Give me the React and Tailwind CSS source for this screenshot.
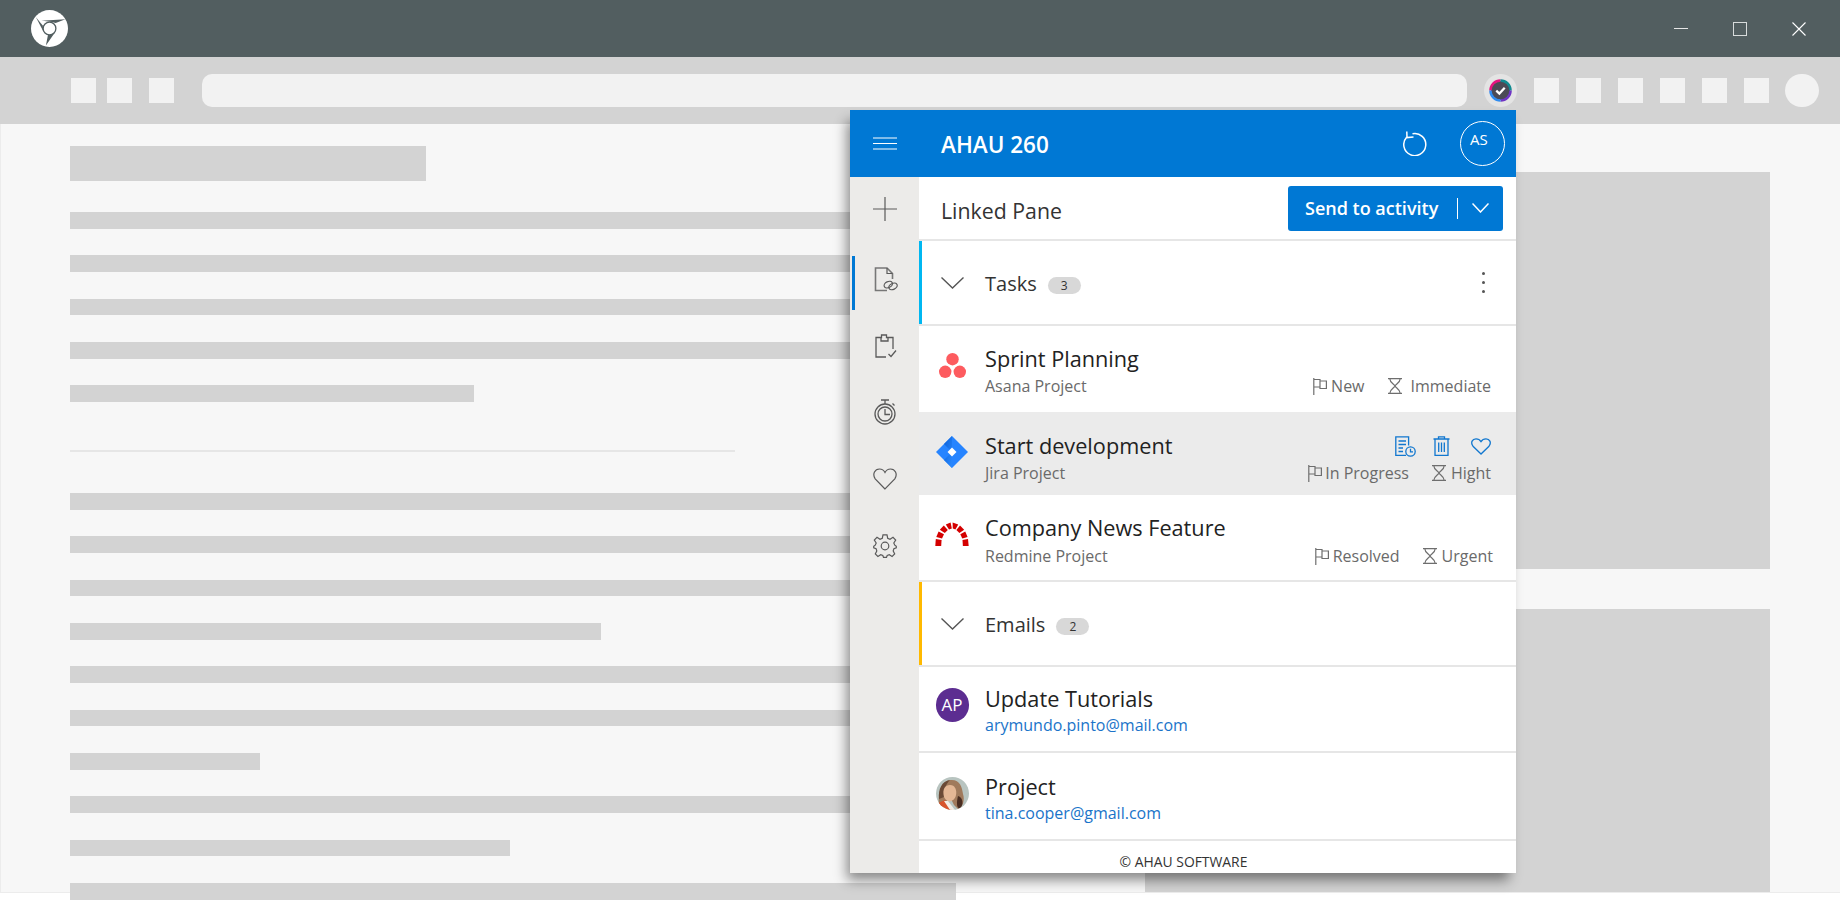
const font = { fontFamily: '"Open Sans", "Noto Sans", sans-serif' };

function ChromeLogo() {
  return (
    <svg width="37" height="37" viewBox="0 0 36 36">
      <circle cx="18" cy="18" r="18" fill="#fff" />
      <circle cx="18" cy="18" r="6.2" fill="none" stroke="#525e60" strokeWidth="1.3" />
      <path d="M10 10.5 C14 11 19 11 24 12.6 L33.5 9 Z" fill="#525e60" />
      <path d="M4.8 7 L12.3 21.5 L11.4 15 Z" fill="#525e60" />
      <path d="M23.6 21.5 L14.5 34.5 L16.5 24.4 C19 24.6 21.6 23.6 23.6 21.5 Z" fill="#525e60" />
    </svg>
  );
}

function ExtensionIcon() {
  return (
    <div className="w-[33px] h-[33px] rounded-full bg-[#e4e4e4] flex items-center justify-center">
      <svg width="23" height="23" viewBox="0 0 24 24">
        <circle cx="12" cy="12" r="10" fill="#4b4a55" />
        <g fill="none" strokeWidth="2.6">
          <path d="M1.5 12 A10.5 10.5 0 0 1 12 1.5" stroke="#e6157f" />
          <path d="M12 1.5 A10.5 10.5 0 0 1 22.5 12" stroke="#0f8a8f" />
          <path d="M22.5 12 A10.5 10.5 0 0 1 12 22.5" stroke="#6f35c4" />
          <path d="M12 22.5 A10.5 10.5 0 0 1 1.5 12" stroke="#2f8cf0" />
        </g>
        <path d="M7.6 12.2 L10.8 15.2 L16.4 9.2" fill="none" stroke="#fff" strokeWidth="2.4" />
      </svg>
    </div>
  );
}

function Block() {
  return <div className="w-[25px] h-[25px] bg-[#f2f2f2]" />;
}

function PlainIcon({ w = 24, h = 24, box = "0 0 24 24", color = "#5a5a5a", sw = 1.2, children }) {
  return (
    <svg width={w} height={h} viewBox={box} fill="none" stroke={color} strokeWidth={sw} className="shrink-0">
      {children}
    </svg>
  );
}

function Flag() {
  return (
    <PlainIcon w={14} h={17} box="0 0 14 17" color="#6e6e6e">
      <path d="M.8 0V17M.8 1.5H7V3H13.4V10.5H7V9H.8M7 1.5V9" />
    </PlainIcon>
  );
}

function Hourglass() {
  return (
    <PlainIcon w={14} h={16} box="0 0 14 16" color="#6e6e6e">
      <path d="M0 .7H14M0 15.3H14M1.8 .7C2 5 6 6 7 8C8 10 12 11 12.2 15.3M12.2 .7C12 5 8 6 7 8C6 10 2 11 1.8 15.3" />
    </PlainIcon>
  );
}

function Meta({ status, priority, flagGap, hourGap }) {
  return (
    <div className="flex items-center gap-[23px] text-[16px] leading-[20px] text-[#6a6a6a]">
      <span className={`flex items-center ${flagGap}`}><Flag />{status}</span>
      <span className={`flex items-center ${hourGap}`}><Hourglass />{priority}</span>
    </div>
  );
}

function AsanaLogo() {
  return (
    <svg width="27" height="25" viewBox="0 0 27 25" fill="#fd5b5f">
      <circle cx="13.5" cy="6.2" r="6.2" />
      <circle cx="6.2" cy="18.8" r="6.2" />
      <circle cx="20.8" cy="18.8" r="6.2" />
    </svg>
  );
}

function JiraLogo() {
  return (
    <svg width="32" height="32" viewBox="0 0 32 32">
      <defs>
        <linearGradient id="jira" x1="0" y1="0" x2="1" y2="1">
          <stop offset="0" stopColor="#0a5fd8" />
          <stop offset="1" stopColor="#2b8bff" />
        </linearGradient>
      </defs>
      <path d="M16 0 L32 16 L16 32 L0 16 Z" fill="#2684ff" />
      <path d="M16 0 L8 8 L16 16 L8 24 L16 32 L16 20.5 L11.5 16 L16 11.5 Z" fill="url(#jira)" />
      <path d="M16 11.5 L20.5 16 L16 20.5 L11.5 16 Z" fill="#fff" />
    </svg>
  );
}

function RedmineLogo() {
  return (
    <svg width="34" height="24" viewBox="0 0 34 24" fill="#d40000">
      <path d="M.3 24 L.8 17 L6.6 18 L6.2 24 Z" />
      <path d="M1.3 15 L3.6 9.6 L9 12.2 L7 16.5 Z" />
      <path d="M4.8 7.8 L8.8 3.6 L12.8 8 L9.8 11 Z" />
      <path d="M10.8 2.6 L15.6 .6 L16.8 6.4 L14 7.4 Z" />
      <path d="M17.6 .5 L23.2 2.4 L20.4 7.4 L17.8 6.4 Z" />
      <path d="M25 3.6 L29.2 7.8 L24.4 11 L21.4 8 Z" />
      <path d="M30.2 9.6 L32.6 15 L27.3 16.5 L25.3 12.2 Z" />
      <path d="M33 17 L33.7 24 L27.9 24 L27.5 18 Z" />
    </svg>
  );
}

function PhotoAvatar() {
  return (
    <svg width="33" height="33" viewBox="0 0 33 33">
      <defs>
        <clipPath id="photo"><circle cx="16.5" cy="16.5" r="16.5" /></clipPath>
      </defs>
      <g clipPath="url(#photo)">
        <rect width="33" height="33" fill="#b8c4c0" />
        <path d="M3 33 C2 20 3 5 14 3 C24 2 26 10 27 17 C29 23 27 30 22 32 L18 28 L14 20 Z" fill="#a07a5c" />
        <path d="M3 22 C2 12 6 4 14 3 C10 7 8 12 8 20 Z" fill="#6b4a36" />
        <path d="M8 20 C6 12 9 8 14 8 C19 8 21 13 20 18 C19 23 15 25 12 24 C10 23 9 22 8 20 Z" fill="#e4b795" />
        <path d="M0 27 L9 23 L17 33 L0 33 Z" fill="#d8532c" />
        <path d="M8 24 L12 24 L19 33 L14 33 Z" fill="#f3ede6" />
        <path d="M22 19 C27 20 28 28 24 31 C21 32 20 27 22 19 Z" fill="#4a2e22" />
      </g>
    </svg>
  );
}

const iconBlue = "#1177cf";

function ActionIcons() {
  return (
    <div className="flex items-center">
      <PlainIcon w={21} h={21} box="0 0 21 21" color={iconBlue} sw={1.3}>
        <path d="M11 19.4H.8V.8H13.6V9.5" />
        <path d="M3.5 5H11M3.5 8.5H11M3.5 12H8M3.5 15.5H8" />
        <circle cx="15.5" cy="15.5" r="4.7" />
        <path d="M15.5 12.8V15.8H18" />
      </PlainIcon>
      <div className="ml-[17px]">
        <PlainIcon w={17} h={20} box="0 0 17 20" color={iconBlue} sw={1.3}>
          <path d="M.5 3H16.5M5.5 3V.8H11.5V3M2 3V19.3H15V3M5.7 6.5V16M8.5 6.5V16M11.3 6.5V16" />
        </PlainIcon>
      </div>
      <div className="ml-[21px]">
        <PlainIcon w={20} h={17} box="0 0 20 17" color={iconBlue} sw={1.3}>
          <path d="M10 16 L2 8.2 C-.8 4.5 1.4 .8 5 .8 C7.2 .8 9 2 10 3.6 C11 2 12.8 .8 15 .8 C18.6 .8 20.8 4.5 18 8.2 Z" />
        </PlainIcon>
      </div>
    </div>
  );
}

function SideIcon({ active, className, children }) {
  return (
    <div className={`relative flex justify-center ${className}`}>
      {active && <div className="absolute left-[2px] top-[-11px] w-[3px] h-[54px] bg-[#0078d4]" />}
      {children}
    </div>
  );
}

function Sidebar() {
  return (
    <div className="w-[69px] shrink-0 bg-[#ecebe9] flex flex-col">
      <SideIcon className="mt-[20px]">
        <PlainIcon w={24} h={24}>
          <path d="M12 0V24M0 12H24" />
        </PlainIcon>
      </SideIcon>
      <SideIcon active className="mt-[46px] pl-[3px]">
        <PlainIcon w={24} h={25} box="0 0 24 25">
          <path d="M13 23.5H1.5V1H13L18.5 6.5V12" stroke="#777" strokeWidth="1.6" />
          <path d="M13 1V6.5H18.5" />
          <ellipse cx="14.3" cy="17.6" rx="4.4" ry="3" transform="rotate(-25 14.3 17.6)" />
          <ellipse cx="19" cy="19.4" rx="4.4" ry="3" transform="rotate(-25 19 19.4)" />
        </PlainIcon>
      </SideIcon>
      <SideIcon className="mt-[42px] pl-[2px]">
        <PlainIcon w={22} h={24} box="0 0 22 24" sw={1.3}>
          <path d="M11 23H1V3.5H6.5V1H11.5V3.5H18V15" />
          <path d="M6 3.5V7H13V3.5" />
          <path d="M13.5 20L16 22.5L21 16.5" />
        </PlainIcon>
      </SideIcon>
      <SideIcon className="mt-[41px]">
        <PlainIcon w={22} h={26} box="0 0 22 26" sw={1.3}>
          <circle cx="11" cy="15" r="10" />
          <circle cx="11" cy="15" r="7" />
          <path d="M11 10V15.5H16M7 1H15M11 1V5M18.5 4.5L20.5 6.5" />
        </PlainIcon>
      </SideIcon>
      <SideIcon className="mt-[43px]">
        <PlainIcon w={24} h={22} box="0 0 24 22">
          <path d="M12 21 L2.2 10.8 C-1 6 2 1 6.5 1 C9 1 11 2.5 12 4.5 C13 2.5 15 1 17.5 1 C22 1 25 6 21.8 10.8 Z" />
        </PlainIcon>
      </SideIcon>
      <SideIcon className="mt-[44px]">
        <PlainIcon w={24} h={24}>
          <circle cx="12" cy="12" r="3.8" />
          <path d="M10 .8H14L14.7 4.2L17 5.2L20 3.3L22.7 6L20.8 9L21.8 11.2L23.3 12.3V13.8L20.9 14.7L20.2 16.9L21.7 19.9L19.1 22.4L16.3 20.7L14.2 21.5L13.5 23.3H10.5L9.8 21.5L7.7 20.7L4.9 22.4L2.3 19.9L3.8 16.9L3.1 14.7L.7 13.8V12.3L2.2 11.2L3.2 9L1.3 6L4 3.3L7 5.2L9.3 4.2Z" />
        </PlainIcon>
      </SideIcon>
    </div>
  );
}

function Divider() {
  return <div className="h-[2px] bg-[#e6e6e6] shrink-0" />;
}

function SectionHead({ title, count, accent, kebab }) {
  return (
    <div className={`h-[83px] flex items-center border-l-[3px] ${accent} pl-[19px] pr-[31px]`}>
      <PlainIcon w={23} h={12} box="0 0 23 12" color="#555" sw={1.4}>
        <path d="M.5 .5L11.5 11L22.5 .5" />
      </PlainIcon>
      <span className="ml-[21px] mt-[2px] text-[20px] text-[#333]">{title}</span>
      <span className="ml-[11px] mt-[5px] w-[33px] h-[17px] rounded-full bg-[#d8d8d8] text-[12px] leading-[17px] text-center text-[#333]">{count}</span>
      {kebab && (
        <div className="ml-auto flex flex-col gap-[6px]">
          <div className="w-[3px] h-[3px] rounded-full bg-[#555]" />
          <div className="w-[3px] h-[3px] rounded-full bg-[#555]" />
          <div className="w-[3px] h-[3px] rounded-full bg-[#555]" />
        </div>
      )}
    </div>
  );
}

function TaskRow({ logo, title, sub, subColor = "text-[#6a6a6a]", subGap = "mt-[3px]", right, actions, className = "" }) {
  return (
    <div className={`flex ${className}`}>
      <div className="w-[34px] h-[34px] mt-[3px] mr-[16px] shrink-0 flex items-center justify-center">{logo}</div>
      <div className="flex-1 min-w-0">
        <div className="flex justify-between items-center h-[28px]">
          <span className="text-[21.7px] leading-[28px] text-[#222]">{title}</span>
          {actions}
        </div>
        <div className={`flex justify-between items-center h-[20px] ${subGap}`}>
          <span className={`text-[16px] leading-[20px] ${subColor}`}>{sub}</span>
          {right}
        </div>
      </div>
    </div>
  );
}

function Bar({ className }) {
  return <div className={`bg-[#d3d3d3] ${className}`} />;
}

export default function App() {
  return (
    <div className="relative w-[1840px] h-[900px] overflow-hidden bg-white" style={font}>
      <div className="h-[57px] bg-[#525e60] flex items-center pl-[31px] pr-[34px]">
        <ChromeLogo />
        <div className="ml-auto flex items-center">
          <div className="w-[14px] h-[1px] bg-[#e6e6e6]" />
          <div className="ml-[45px] w-[14px] h-[14px] border border-[#d8dcdc]" />
          <svg className="ml-[45px]" width="14" height="14" viewBox="0 0 14 14" stroke="#fff" strokeWidth="1.1">
            <path d="M.5 .5L13.5 13.5M13.5 .5L.5 13.5" />
          </svg>
        </div>
      </div>

      <div className="h-[67px] bg-[#d3d3d3] flex items-center pl-[71px]">
        <Block />
        <div className="ml-[11px]"><Block /></div>
        <div className="ml-[17px]"><Block /></div>
        <div className="ml-[28px] w-[1265px] h-[33px] rounded-[10px] bg-[#f2f2f2]" />
        <div className="ml-[17px]"><ExtensionIcon /></div>
        <div className="ml-[17px] flex gap-[17px]">
          <Block /><Block /><Block /><Block /><Block /><Block />
        </div>
        <div className="ml-[16px] w-[34px] h-[33px] rounded-full bg-[#f2f2f2]" />
      </div>

      <div className="h-[769px] bg-[#f7f7f7] border-l border-b border-[#ececec] flex pl-[69px]">
        <div className="w-[886px] shrink-0">
          <Bar className="mt-[22px] w-[356px] h-[35px]" />
          <Bar className="mt-[31px] h-[17px]" />
          <Bar className="mt-[26px] h-[17px]" />
          <Bar className="mt-[27px] h-[16px]" />
          <Bar className="mt-[27px] h-[17px]" />
          <Bar className="mt-[26px] w-[404px] h-[17px]" />
          <div className="mt-[48px] w-[665px] h-[2px] bg-[#e6e6e6]" />
          <Bar className="mt-[41px] h-[17px]" />
          <Bar className="mt-[26px] h-[17px]" />
          <Bar className="mt-[27px] h-[16px]" />
          <Bar className="mt-[27px] w-[531px] h-[17px]" />
          <Bar className="mt-[26px] h-[17px]" />
          <Bar className="mt-[27px] h-[16px]" />
          <Bar className="mt-[27px] w-[190px] h-[17px]" />
          <Bar className="mt-[26px] h-[17px]" />
          <Bar className="mt-[27px] w-[440px] h-[16px]" />
          <Bar className="mt-[27px] h-[17px]" />
        </div>
        <div className="ml-[189px] w-[625px] flex flex-col">
          <Bar className="mt-[48px] h-[398px]" />
          <Bar className="mt-[40px] h-[283px]" />
        </div>
      </div>

      <div className="absolute left-[850px] top-[110px] w-[666px] h-[763px] bg-white flex flex-col shadow-[-5px_9px_12px_-2px_rgba(0,0,0,0.45)]">
        <div className="h-[67px] shrink-0 bg-[#0078d4] flex items-center text-white">
          <svg className="ml-[23px] shrink-0" width="24" height="13" viewBox="0 0 24 13" stroke="#fff" strokeWidth="1">
            <path d="M0 1H24M0 6.5H24M0 12H24" />
          </svg>
          <span className="ml-[44px] mt-[2px] text-[22.5px] font-semibold">AHAU 260</span>
          <svg className="ml-auto" width="24" height="25" viewBox="0 0 24 25" fill="none" stroke="#fff" strokeWidth="1.5">
            <path d="M9.5 2.8A11 11 0 1 1 3.6 6.2M3.8 .5L4 6.6L10.5 6" />
          </svg>
          <div className="ml-[33px] mr-[11px] w-[45px] h-[45px] rounded-full border border-white text-[15px] leading-[34px] pl-[9px]">AS</div>
        </div>

        <div className="flex flex-1 min-h-0">
          <Sidebar />
          <div className="flex-1 min-w-0 flex flex-col">
            <div className="h-[62px] shrink-0 flex items-center pl-[22px] pr-[13px]">
              <span className="mt-[5px] text-[21.3px] text-[#333]">Linked Pane</span>
              <div className="ml-auto w-[215px] h-[45px] rounded-[3px] bg-[#0078d4] flex items-center pl-[17px] text-white">
                <span className="text-[18px] font-semibold">Send to activity</span>
                <div className="ml-auto w-[1px] h-[21px] bg-white" />
                <svg className="ml-[14px] mr-[14px]" width="17" height="10" viewBox="0 0 17 10" fill="none" stroke="#fff" strokeWidth="1.5">
                  <path d="M.5 .5L8.5 9L16.5 .5" />
                </svg>
              </div>
            </div>
            <Divider />
            <SectionHead title="Tasks" count="3" accent="border-[#00b7f1]" kebab />
            <Divider />
            <TaskRow
              className="h-[86px] pt-[19px] pl-[16px] pr-[25px]"
              logo={<AsanaLogo />}
              title="Sprint Planning"
              sub="Asana Project"
              right={<Meta status="New" priority="Immediate" flagGap="gap-[4px]" hourGap="gap-[9px]" />}
            />
            <TaskRow
              className="h-[83px] pt-[20px] pl-[16px] pr-[25px] bg-[#ebebeb]"
              logo={<JiraLogo />}
              title="Start development"
              sub="Jira Project"
              actions={<ActionIcons />}
              right={<Meta status="In Progress" priority="Hight" flagGap="gap-[3px]" hourGap="gap-[5px]" />}
            />
            <TaskRow
              className="h-[85px] pt-[19px] pl-[16px] pr-[23px]"
              logo={<RedmineLogo />}
              title="Company News Feature"
              sub="Redmine Project"
              subGap="mt-[4px]"
              right={<Meta status="Resolved" priority="Urgent" flagGap="gap-[4px]" hourGap="gap-[5px]" />}
            />
            <Divider />
            <SectionHead title="Emails" count="2" accent="border-[#ffb900]" />
            <Divider />
            <TaskRow
              className="h-[84px] pt-[18px] pl-[16px] pr-[25px]"
              logo={<div className="w-[33px] h-[34px] rounded-full bg-[#5c2d91] text-white text-[17px] leading-[34px] text-center">AP</div>}
              title="Update Tutorials"
              sub="arymundo.pinto@mail.com"
              subColor="text-[#1a74c9]"
              subGap="mt-[2px]"
            />
            <Divider />
            <TaskRow
              className="h-[86px] pt-[20px] pl-[16px] pr-[25px]"
              logo={<PhotoAvatar />}
              title="Project"
              sub="tina.cooper@gmail.com"
              subColor="text-[#1a74c9]"
              subGap="mt-[2px]"
            />
            <Divider />
            <div className="flex-1 flex items-center justify-center pr-[68px] pt-[11px] text-[13.9px] text-[#333]">© AHAU SOFTWARE</div>
          </div>
        </div>
      </div>
    </div>
  );
}
